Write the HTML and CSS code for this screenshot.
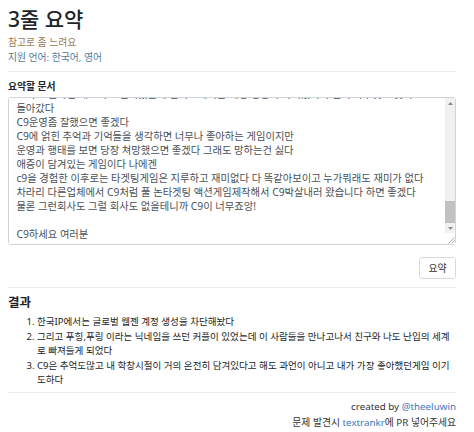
FILE: index.html
```html
<!DOCTYPE html>
<html lang="ko">
<head>
<meta charset="utf-8">
<title>3줄 요약</title>
<link rel="stylesheet" href="styles.css">
</head>
<body>
<div class="page">
  <h1 class="title">3줄 요약</h1>
  <div class="notes">
    <p class="note note-slow">참고로 좀 느려요</p>
    <p class="note note-lang">지원 언어: 한국어, 영어</p>
  </div>
  <hr class="rule rule-top">
  <form class="form">
    <label class="label" for="doc">요약할 문서</label>
    <div class="doc-wrap">
      <textarea id="doc" class="doc">처음 C9을 알게된건 중학교 2학년때 친구의 소개로 시작하게 되었다
그때는 아무것도 모르고 그냥 캐릭터가 멋있어서 시작했는데
하다보니 점점 빠져들어서 매일같이 친구들과 PC방에 가서 플레이했다
검사 격투가 도적 주술사 네가지 직업이 있었는데 나는 검사를 제일 좋아했다
던전을 돌면서 보스를 잡을때의 손맛은 다른 게임에서 느낄 수 없는 것이었다
그리고 푸힝,푸링 이라는 닉네임을 쓰던 커플이 있었는데 이 사람들을 만나고나서 친구와 나도 난입의 세계로 빠져들게 되었다
난입을 하면서 처음에는 매일 지기만 했는데 조금씩 실력이 늘어가는게 느껴졌다
그렇게 학교가 끝나면 바로 집에 와서 C9을 켜는게 일상이 되었다
방학때는 하루종일 C9만 했던 기억이 난다
고등학교에 올라가서도 시험기간만 빼면 계속 C9을 했었다
길드에 들어가서 길드원들과 같이 레이드도 돌고 정모도 나갔었다
그때 만났던 사람들 중에는 아직도 연락하는 사람들이 있다
그러다가 점점 유저가 줄어들고 업데이트도 뜸해지기 시작했다
새로운 던전이 나와도 예전만큼 사람들이 모이지 않았다
결국 국내 서비스가 종료된다는 공지가 올라왔고
마지막 날에는 길드원들이 다같이 모여서 스크린샷을 찍었다
서비스가 종료되고 나서도 한동안은 다른 게임을 해도 재미가 없었다
C9은 추억도많고 내 학창시절이 거의 온전히 담겨있다고 해도 과언이 아니고 내가 가장 좋아했던게임 이기도하다
그래서 글로벌 서버가 있다는 이야기를 듣고 정말 기뻤다
그리고 얼마전 해보려고 접속했는데 한국IP에서는 계정 생성이 막혀있어서 결국 아무것도 못하고
돌아갔다
C9운영좀 잘했으면 좋겠다
C9에 얽힌 추억과 기억들을 생각하면 너무나 좋아하는 게임이지만
운영과 행태를 보면 당장 쳐망했으면 좋겠다 그래도 망하는건 싫다
애증이 담겨있는 게임이다 나에겐
c9을 경험한 이후로는 타겟팅게임은 지루하고 재미없다 다 똑같아보이고 누가뭐래도 재미가 없다
차라리 다른업체에서 C9처럼 풀 논타겟팅 액션게임제작해서 C9박살내러 왔습니다 하면 좋겠다
물론 그런회사도 그럴 회사도 없을테니까 C9이 너무죠앙!

C9하세요 여러분</textarea>
      <div class="scrollbar" aria-hidden="true">
        <div class="sb-btn">
          <svg width="5" height="3" viewBox="0 0 5 3"><polygon points="2.5,0 5,3 0,3" fill="#8a8a8a"/></svg>
        </div>
        <div class="sb-track"><div class="sb-thumb"></div></div>
        <div class="sb-btn">
          <svg width="5" height="3" viewBox="0 0 5 3"><polygon points="0,0 5,0 2.5,3" fill="#8a8a8a"/></svg>
        </div>
        <div class="sb-corner">
          <svg width="8" height="8" viewBox="0 0 8 8"><path d="M7.5 1.5 L1.5 7.5 M7.5 4.5 L4.5 7.5" stroke="#9a9a9a" stroke-width="0.8" fill="none"/></svg>
        </div>
      </div>
    </div>
    <div class="actions">
      <button type="button" class="btn">요약</button>
    </div>
  </form>
  <hr class="rule">
  <section class="result">
    <h2 class="result-title">결과</h2>
    <ol class="result-list">
      <li>한국IP에서는 글로벌 웹젠 계정 생성을 차단해놨다</li>
      <li>그리고 푸힝,푸링 이라는 닉네임을 쓰던 커플이 있었는데 이 사람들을 만나고나서 친구와 나도 난입의 세계로 빠져들게 되었다</li>
      <li>C9은 추억도많고 내 학창시절이 거의 온전히 담겨있다고 해도 과언이 아니고 내가 가장 좋아했던게임 이기도하다</li>
    </ol>
  </section>
  <hr class="rule rule-bottom">
  <footer class="footer">
    <p class="footer-line">created by <a class="link" href="#">@theeluwin</a></p>
    <p class="footer-line">문제 발견시 <a class="link" href="#">textrankr</a>에 PR 넣어주세요</p>
  </footer>
</div>
<script src="script.js"></script>
</body>
</html>
```

FILE: styles.css
```css
html, body {
  margin: 0;
  padding: 0;
  background: #ffffff;
}

body {
  font-family: "Noto Sans", "Noto Sans CJK KR", sans-serif;
  font-size: 9.8px;
  color: #212529;
}

.page {
  width: 448px;
  margin-left: 8px;
  padding-top: 7px;
}

.title {
  margin: 0 0 4px;
  font-size: 21px;
  line-height: 24px;
  font-weight: 500;
  color: #212529;
}

.notes {
  line-height: 15px;
}

.note {
  margin: 0;
}

.note-slow {
  color: #9b7c56;
}

.note-lang {
  color: #4f7898;
}

.rule {
  border: 0;
  border-top: 1px solid #ebebeb;
  margin: 8px 0 0;
  height: 0;
}

.rule-top {
  margin-top: 6px;
}

.rule-bottom {
  margin-top: 4px;
}

.form {
  display: flex;
  flex-direction: column;
  margin: 0;
}

.label {
  display: block;
  margin-top: 8px;
  line-height: 14px;
  font-weight: 700;
  color: #212529;
}

.doc-wrap {
  position: relative;
  margin-top: 3px;
  height: 148px;
}

.doc {
  box-sizing: border-box;
  display: block;
  width: 448px;
  height: 148px;
  margin: 0;
  padding: 3.6px 17.4px 3.6px 7.4px;
  border: 1px solid #ced4da;
  border-radius: 3px;
  font-family: "Noto Sans", "Noto Sans CJK KR", sans-serif;
  font-size: 10.3px;
  line-height: 14px;
  color: #495057;
  background: #ffffff;
  overflow-y: scroll;
  scrollbar-width: none;
  resize: none;
}

.scrollbar {
  position: absolute;
  top: 1px;
  right: 1px;
  bottom: 1px;
  width: 10px;
  display: flex;
  flex-direction: column;
  background: #f1f1f1;
}

.sb-btn {
  height: 10px;
  display: flex;
  align-items: center;
  justify-content: center;
}

.sb-btn svg {
  display: block;
}

.sb-track {
  flex: 1;
  display: flex;
  flex-direction: column;
  justify-content: flex-end;
}

.sb-thumb {
  height: 22px;
  background: #c1c1c1;
}

.sb-corner {
  height: 11px;
  background: #ffffff;
  display: flex;
  align-items: flex-end;
  justify-content: flex-end;
}

.sb-corner svg {
  display: block;
}

.actions {
  display: flex;
  justify-content: flex-end;
  margin-top: 12px;
}

.btn {
  box-sizing: border-box;
  height: 22px;
  width: 37px;
  padding: 0;
  border: 1px solid #d9d9d9;
  border-radius: 3px;
  background: #ffffff;
  font-family: "Noto Sans", "Noto Sans CJK KR", sans-serif;
  font-size: 9.8px;
  color: #333333;
}

.result-title {
  margin: 7px 0 0;
  font-size: 12.5px;
  line-height: 16px;
  font-weight: 700;
  color: #222222;
}

.result-list {
  margin: 4px 0 0;
  padding-left: 29px;
  font-size: 9.55px;
  line-height: 14.5px;
  color: #212529;
}

.footer {
  margin-top: 6px;
  text-align: right;
  color: #333333;
}

.footer-line {
  margin: 0;
  line-height: 16px;
}

.link {
  color: #3b79ba;
  text-decoration: none;
}
```

FILE: script.js
```js
var doc = document.querySelector('.doc');
doc.scrollTop = doc.scrollHeight;
```
